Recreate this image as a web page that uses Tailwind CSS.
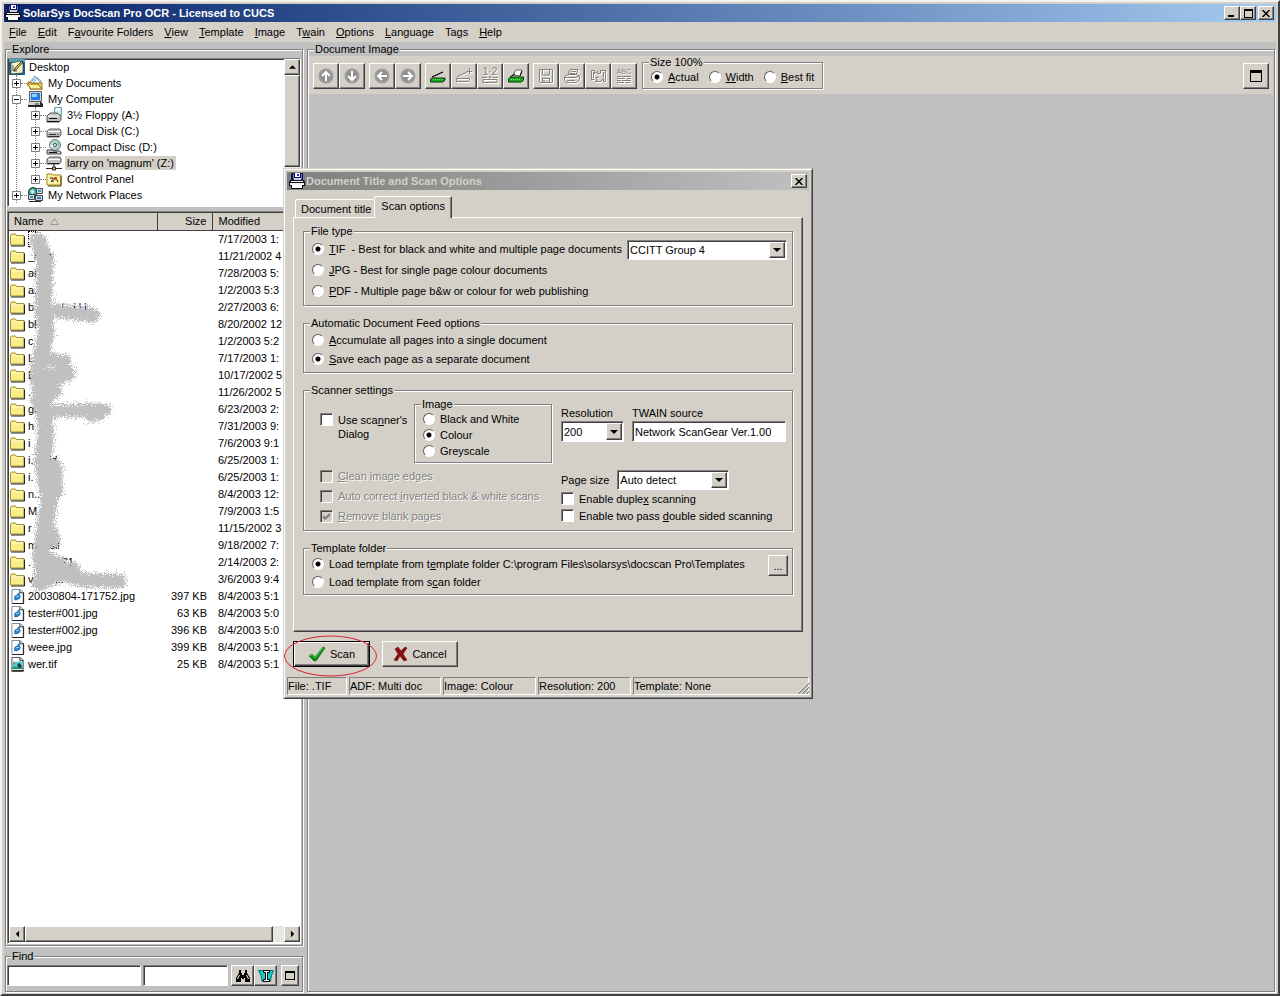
<!DOCTYPE html>
<html lang="en">
<head>
  <meta charset="UTF-8">
  <title>SolarSys DocScan Pro OCR - Licensed to CUCS</title>
  <script src="https://cdn.jsdelivr.net/npm/@tailwindcss/browser@4"></script>
</head>
<body class="bg-[#d4d0c8] font-['Liberation_Sans',Arial,sans-serif] text-[11px] leading-[14px] text-black">

  <!-- Icon set -->
  <svg class="hidden" aria-hidden="true">
    <symbol id="app" viewBox="0 0 16 16">
      <path d="M3 0h11v8H2V1z" fill="#10104a"/><path d="M4 1h1v5H4zM12 1h1v5h-1z" fill="#5a6cf0"/><path d="M6 0h5v4H6z" fill="#fff"/><path d="M8 1h2v2H8z" fill="#2434c8"/><path d="M5 5h7v3H5z" fill="#c8d0e8"/>
      <path d="M1 7h14l1 2v4H0V9z" fill="#111"/><path d="M2 8h12v1H2zM1 10h14v2H1z" fill="#f4f4f4"/><path d="M2 12h12v4H2z" fill="#111"/><path d="M3 12h10v3H3z" fill="#fff"/>
    </symbol>
    <symbol id="desktop" viewBox="0 0 16 16">
      <path d="M0 0h16v16H0z" fill="#1c6286"/><path d="M0 0h16v3H0z" fill="#50a4b8"/><path d="M2 4l9-2 3 3v9L2 15z" fill="#f8f3cd" stroke="#333" stroke-width=".7"/><path d="M5 12l1-3 7-7 1 1-6 7z" fill="#e6c63c" stroke="#222" stroke-width=".8"/><path d="M4 6v6h4" fill="none" stroke="#555"/>
    </symbol>
    <symbol id="documents" viewBox="0 0 16 16">
      <path d="M3 7l5-6 6 5v6H3z" fill="#fff" stroke="#7a8ca0"/><path d="M5 6l4-3 4 4M6 8l3-3" fill="none" stroke="#4a9fd5"/><path d="M1 7h3l1 1h10v6H3z" fill="#f4d95e" stroke="#9a7b12"/><path d="M0 9h11l4 5H4z" fill="#fff09a" stroke="#8a6d10"/>
    </symbol>
    <symbol id="computer" viewBox="0 0 16 16">
      <path d="M2.500.500h12v10h-12z" fill="#d6d2c4" stroke="#557"/><path d="M4 2h9v7H4z" fill="#1c7fe0"/><path d="M5 3h5v3H5z" fill="#8fd2ff"/><path d="M1 11h13l2 2v3H1z" fill="#223"/><path d="M1 11h12v3H1z" fill="#d9d5c8"/><path d="M8 13h4" stroke="#333"/>
    </symbol>
    <symbol id="floppy" viewBox="0 0 16 16">
      <path d="M8.500.500h7v8h-7z" fill="#cfe6ef" stroke="#6c9db4"/><path d="M10 1h4v3h-4z" fill="#fff"/><path d="M1 9l3-3h7l4 3v4l-2 2H1z" fill="#c0c0c0" stroke="#555"/><path d="M3 11.500h8M1 14.500h12" stroke="#111"/><path d="M2 9h11" stroke="#fff"/>
    </symbol>
    <symbol id="disk" viewBox="0 0 16 16">
      <path d="M1 8l3-2h10l1 2v4l-2 2H1z" fill="#b9b9b9" stroke="#666"/><path d="M2 8.500h12" stroke="#fff"/><path d="M3 11.500h7M2 13.500h11" stroke="#333"/><path d="M11 11h2v1h-2z" fill="#2a2"/>
    </symbol>
    <symbol id="cd" viewBox="0 0 16 16">
      <circle cx="9" cy="6" r="5.500" fill="#b8ccc8" stroke="#678"/><path d="M9 6l4-4 1 4z" fill="#75d28f"/><path d="M9 6l-4 3-1-3z" fill="#e8f4ff"/><circle cx="9" cy="6" r="1.500" fill="#fff" stroke="#555"/><path d="M1 11h5l2 1h5l2 1v2H1z" fill="#c8c8c8" stroke="#444"/><path d="M3 13.500h8" stroke="#111"/>
    </symbol>
    <symbol id="netdrive" viewBox="0 0 16 16">
      <path d="M1 4l3-2h10l1 2v3l-2 2H1z" fill="#c4c4c4" stroke="#555"/><path d="M2 4.500h12" stroke="#fff"/><path d="M2 8.500h11M8 9v4M0 13.500h16" stroke="#222"/><path d="M6.500 12h3v3h-3z" fill="#d8c24a" stroke="#222"/>
    </symbol>
    <symbol id="control" viewBox="0 0 16 16">
      <path d="M1 3h5l1 1h8v10H1z" fill="#fff0a0" stroke="#a58a1a"/><path d="M15 5v10H2" fill="none" stroke="#4b3d05"/><path d="M4 7h3v4M10 7l2 4" fill="none" stroke="#222"/><path d="M8 6h3v3H8z" fill="#d44a24"/><path d="M5 9h2v2H5z" fill="#2a60c0"/>
    </symbol>
    <symbol id="network" viewBox="0 0 16 16">
      <circle cx="6" cy="5" r="4.500" fill="#33a862" stroke="#134"/><path d="M3 4l3-2 2 3-3 3z" fill="#bfe8ff"/><path d="M9.500 1.500h6v5h-6zM1.500 7.500h6v5h-6z" fill="#dad6c8" stroke="#445"/><path d="M11 3h3v2h-3zM3 9h3v2H3z" fill="#1da0d8"/><path d="M8.500 8.500h7v5h-7z" fill="#dad6c8" stroke="#445"/><path d="M10 10h4v2h-4z" fill="#1c7fe0"/><path d="M2 14.500h12" stroke="#223"/>
    </symbol>
    <symbol id="folder" viewBox="0 0 16 14">
      <path d="M.5 3l1-1.500h4l1 1.500h7.500v9.500H.5z" fill="#f8ee88" stroke="#a09030"/><path d="M2 4.500h11" stroke="#fffbd8"/><path d="M14.500 4v9.500H1" fill="none" stroke="#222"/>
    </symbol>
    <symbol id="jpg" viewBox="0 0 14 16">
      <path d="M.5.500h9l3 3v12H.5z" fill="#fff" stroke="#7b8590"/><path d="M13 4v11.500H1" fill="none" stroke="#111"/><path d="M9 1v3h4" fill="none" stroke="#222"/><path d="M3 8l2-2 1 0 1-2h2v2l1 2-1 2-3 2H3z" fill="#2a7ec0"/><path d="M5 8.500l3-1" stroke="#bfe2ff"/>
    </symbol>
    <symbol id="tif" viewBox="0 0 14 16">
      <path d="M.5.500h9l3 3v12H.5z" fill="#fff" stroke="#444"/><path d="M9 1v3h4" fill="none" stroke="#222"/><path d="M1 5h11v5H1z" fill="#4cd0d8"/><path d="M1 10h11v3H1z" fill="#1a8f7c"/><path d="M6 9l2-3 3 3-2 3z" fill="#1d3b34"/><path d="M1 14.500h12" stroke="#111"/><path d="M2 6h2v2H2z" fill="#e8566a"/>
    </symbol>
    <symbol id="up" viewBox="0 0 16 16">
      <circle cx="8" cy="8" r="7.500" fill="#909090"/><circle cx="8" cy="8" r="6.500" fill="none" stroke="#a8a8a8"/><path d="M8 13V4M4 8l4-4 4 4" fill="none" stroke="#fff" stroke-width="2"/>
    </symbol>
    <symbol id="scan" viewBox="0 0 16 16">
      <path d="M2 9L13 4" fill="none" stroke="#000" stroke-width="1.300"/><path d="M.5 11l1.500-1h13v2l-2 2H.5z" fill="#1fa51f" stroke="#063a06"/><path d="M3 11.500h10" stroke="#6be56b" stroke-dasharray="1 1"/>
    </symbol>
    <symbol id="scan-page" viewBox="0 0 16 16">
      <path d="M5 7l3-5h6l-2 6z" fill="#fff" stroke="#666"/><path d="M2 9l5-3M12 8l2-5" stroke="#000"/><path d="M.5 11l2-2h13v3l-2 2H.5z" fill="#1fa51f" stroke="#063a06"/><path d="M3 11.500h10" stroke="#6be56b" stroke-dasharray="1 1"/>
    </symbol>
    <symbol id="scan-add" viewBox="0 0 16 16">
      <path d="M1 9l10-5M13.500 0v6M11 3.500h5M.5 10.500h13v2l-1 1H.5z" fill="none" stroke="currentColor"/>
    </symbol>
    <symbol id="scan-bed" viewBox="0 0 16 16">
      <path d="M0 8.500h5m2 0h2m2 0h5M1 10.500h14v3H1zM7 6.500l2 2" fill="none" stroke="currentColor"/>
    </symbol>
    <symbol id="save" viewBox="0 0 16 16">
      <path d="M1.500 1.500h13v13h-12l-1-1zM4.500 2v5h7V2M4.500 14.500v-4h7v4M6 12v2" fill="none" stroke="currentColor"/>
    </symbol>
    <symbol id="print" viewBox="0 0 16 16">
      <path d="M4 7l2-5.500h8L12 7M7 3.500h5M6 5.500h5M.5 9l3-2.500h9l3 2v3l-3 3h-10l-2-2zM1 9.500h11l3-2M3 12.500h8" fill="none" stroke="currentColor"/>
    </symbol>
    <symbol id="rotate" viewBox="0 0 16 16">
      <path d="M1.500 2.500v9h3M3.500 4v6M1.500 2.500h3v3l3-2v2h3v-3h5v11h-2v-3l-3 3h-5l2-2-2-2h3M13.500 4v5M5 13.500h5" fill="none" stroke="currentColor"/>
    </symbol>
    <symbol id="lines" viewBox="0 0 16 9">
      <path d="M1 1.500h4m1 0h9M1 3.500h8m2 0h4M1 5.500h4m1 0h9M1 7.500h7m2 0h5" fill="none" stroke="currentColor"/>
    </symbol>
    <symbol id="box" viewBox="0 0 14 14">
      <path d="M1.500 1.500h11v11h-11z" fill="none" stroke="#000"/><path d="M1 1h12v3H1z"/>
    </symbol>
    <symbol id="binoculars" viewBox="0 0 16 16">
      <path d="M4 2h2v3h1v2h2V5h1V2h2v3l3 5v4h-5v-4H9v1H7v-1H6v4H1v-4l3-5z"/><path d="M4.500 7l-2 4M11.500 7l2 4" stroke="#fff"/>
    </symbol>
    <symbol id="textfind" viewBox="0 0 16 16">
      <path d="M.5 2.500h15l-2 5-1 6H4l-1-6z" fill="#18c8c8" stroke="#077"/><path d="M5.500 2.500h6v2h-2v7h2v2h-6v-2h2v-7h-2z" fill="#fff" stroke="#000"/>
    </symbol>
    <symbol id="close" viewBox="0 0 8 7"><path d="M.5 0L7.500 7M7.500 0L.5 7" stroke="#000" stroke-width="1.500"/></symbol>
    <symbol id="arrow" viewBox="0 0 8 4"><path d="M0 0h8L4 4z"/></symbol>
  </svg>

  <div class="relative flex min-h-screen flex-col border-2 border-t-[#f4f2ee] border-l-[#f4f2ee] border-r-[#404040] border-b-[#404040] p-[2px]">

    <header class="flex h-[18px] items-center bg-linear-to-r from-[#0a246a] to-[#a6caf0] pr-[2px] pl-px text-white">
      <svg class="size-4"><use href="#app"/></svg>
      <h1 class="flex-1 pl-[2px] font-bold">SolarSys DocScan Pro OCR - Licensed to CUCS</h1>
      <button aria-label="Minimize" class="flex h-[14px] w-4 items-end border border-t-white border-l-white border-r-[#404040] border-b-[#404040] bg-[#d4d0c8] pb-[2px] pl-[3px] shadow-[inset_-1px_-1px_0_#808080]"><span class="h-[2px] w-[6px] bg-black"></span></button>
      <button aria-label="Maximize" class="flex h-[14px] w-4 items-center justify-center border border-t-white border-l-white border-r-[#404040] border-b-[#404040] bg-[#d4d0c8] shadow-[inset_-1px_-1px_0_#808080]"><span class="h-[9px] w-[9px] border border-t-2 border-black"></span></button>
      <button aria-label="Close" class="ml-[2px] flex h-[14px] w-4 items-center justify-center border border-t-white border-l-white border-r-[#404040] border-b-[#404040] bg-[#d4d0c8] shadow-[inset_-1px_-1px_0_#808080]"><svg class="h-[7px] w-2"><use href="#close"/></svg></button>
    </header>

    <nav class="flex h-5 items-center gap-[11px] pl-[5px]">
      <a href="#"><u>F</u>ile</a>
      <a href="#"><u>E</u>dit</a>
      <a href="#">F<u>a</u>vourite Folders</a>
      <a href="#"><u>V</u>iew</a>
      <a href="#"><u>T</u>emplate</a>
      <a href="#"><u>I</u>mage</a>
      <a href="#">T<u>w</u>ain</a>
      <a href="#"><u>O</u>ptions</a>
      <a href="#"><u>L</u>anguage</a>
      <a href="#">Ta<u>g</u>s</a>
      <a href="#"><u>H</u>elp</a>
    </nav>

    <main class="flex flex-1 gap-1 bg-[#c0c0c0] px-px">
      <div class="flex w-[298px] flex-col gap-[3px]">
        <fieldset class="flex min-w-0 flex-1 flex-col border border-[#808080] px-px pb-px shadow-[1px_1px_0_#fff,inset_1px_1px_0_#fff]">
          <legend class="ml-1 bg-[#c0c0c0] px-px">Explore</legend>

          <div class="mt-[2px] flex h-[149px] border border-t-[#808080] border-l-[#808080] border-r-white border-b-white bg-white shadow-[inset_1px_1px_0_#404040]">
            <div class="min-w-0 flex-1 overflow-hidden">
              <div class="flex h-4 items-center gap-1 pl-px"><svg class="size-4"><use href="#desktop"/></svg>Desktop</div>
              <ul id="tree" class="relative before:absolute before:top-0 before:left-2 before:h-full before:border-l before:border-dotted before:border-[#808080]"></ul>
            </div>
            <div class="flex w-4 flex-col bg-[#e9e7e3]">
              <button aria-label="Scroll up" class="flex h-4 items-center justify-center border border-t-white border-l-white border-r-[#404040] border-b-[#404040] bg-[#d4d0c8] shadow-[inset_-1px_-1px_0_#808080]"><svg class="h-1 w-[7px] rotate-180"><use href="#arrow"/></svg></button>
              <div class="h-[92px] border border-t-white border-l-white border-r-[#404040] border-b-[#404040] bg-[#d4d0c8] shadow-[inset_-1px_-1px_0_#808080]"></div>
            </div>
          </div>

          <div class="relative mt-1 flex flex-1 flex-col overflow-hidden border border-t-[#808080] border-l-[#808080] border-r-white border-b-white bg-white pb-px shadow-[inset_1px_1px_0_#404040]">
            <div class="flex-1 overflow-hidden pt-px pl-px">
              <table class="w-full table-fixed border-collapse whitespace-pre">
                <thead>
                  <tr class="h-[17px] bg-[#d4d0c8]">
                    <th class="w-[148px] border-r border-b border-[#404040] pl-[5px] text-left font-normal"><span class="inline-flex items-center gap-1">Name <svg class="h-[7px] w-[9px]" viewBox="0 0 9 7"><path d="M.5 6.500L4.500.500l4 6z" fill="none" stroke="#999"/></svg></span></th>
                    <th class="w-[55px] border-r border-b border-[#404040] pr-[5px] text-right font-normal">Size</th>
                    <th class="border-b border-[#404040] pl-[6px] text-left font-normal">Modified</th>
                  </tr>
                </thead>
                <tbody id="files"></tbody>
              </table>
            </div>
            <!-- grey scribble over the private folder names -->
            <svg class="pointer-events-none absolute top-0 left-0 h-[400px] w-[200px]" viewBox="7 211 200 400" fill="none" stroke="#c0c0c0" stroke-linecap="round" stroke-linejoin="round">
              <filter id="grain" x="-10%" y="-5%" width="120%" height="110%"><feTurbulence type="fractalNoise" baseFrequency="0.9" numOctaves="1" result="n"/><feDisplacementMap in="SourceGraphic" in2="n" scale="16" xChannelSelector="R" yChannelSelector="G"/></filter>
              <g filter="url(#grain)">
                <path d="M37 240l7 20-1 30-1 20 3 20-5 25-3 20 5 30 3 30-4 25 4 20 3 20-3 20-3 20-2 15 2 25" stroke-width="17"/>
                <path d="M46 309l46 5M40 358l23 2M38 384l30-11M35 377l32-5M36 400l18-9M48 410l55-1M90 414l8-1" stroke-width="14"/>
                <path d="M54 465v26M38 554l22 10M38 582l34-14M46 568l34 10M80 579l38 1M50 532l2 6M40 392v12" stroke-width="15"/>
              </g>
            </svg>
            <div class="ml-px flex h-4 bg-[#e9e7e3]">
              <button aria-label="Scroll left" class="flex w-4 items-center justify-center border border-t-white border-l-white border-r-[#404040] border-b-[#404040] bg-[#d4d0c8] shadow-[inset_-1px_-1px_0_#808080]"><svg class="h-1 w-[7px] rotate-90"><use href="#arrow"/></svg></button>
              <div class="w-[248px] border border-t-white border-l-white border-r-[#404040] border-b-[#404040] bg-[#d4d0c8] shadow-[inset_-1px_-1px_0_#808080]"></div>
              <button aria-label="Scroll right" class="ml-auto flex w-4 items-center justify-center border border-t-white border-l-white border-r-[#404040] border-b-[#404040] bg-[#d4d0c8] shadow-[inset_-1px_-1px_0_#808080]"><svg class="h-1 w-[7px] -rotate-90"><use href="#arrow"/></svg></button>
            </div>
          </div>
        </fieldset>

        <fieldset class="min-w-0 border border-[#808080] px-px pb-[5px] shadow-[1px_1px_0_#fff,inset_1px_1px_0_#fff]">
          <legend class="ml-1 bg-[#c0c0c0] px-px">Find</legend>
          <div class="mt-[2px] flex h-[21px]">
            <input aria-label="Find text" class="w-[134px] border border-t-[#808080] border-l-[#808080] border-r-white border-b-white bg-white px-1 shadow-[inset_1px_1px_0_#404040]">
            <input aria-label="Find in" class="ml-[2px] w-[85px] border border-t-[#808080] border-l-[#808080] border-r-white border-b-white bg-white px-1 shadow-[inset_1px_1px_0_#404040]">
            <button aria-label="Find" class="ml-[3px] flex w-[23px] items-center justify-center border border-t-white border-l-white border-r-[#404040] border-b-[#404040] bg-[#d4d0c8] shadow-[inset_-1px_-1px_0_#808080]"><svg class="size-4"><use href="#binoculars"/></svg></button>
            <button aria-label="Full text search" class="flex w-[23px] items-center justify-center border border-t-white border-l-white border-r-[#404040] border-b-[#404040] bg-[#d4d0c8] shadow-[inset_-1px_-1px_0_#808080]"><svg class="size-4"><use href="#textfind"/></svg></button>
            <button aria-label="Expand" class="ml-1 flex w-[18px] items-center justify-center border border-t-white border-l-white border-r-[#404040] border-b-[#404040] bg-[#d4d0c8] shadow-[inset_-1px_-1px_0_#808080]"><span class="h-[9px] w-[10px] border border-t-2 border-black"></span></button>
          </div>
        </fieldset>
      </div>

      <fieldset class="min-w-0 flex-1 border border-[#808080] px-px shadow-[1px_1px_0_#fff,inset_1px_1px_0_#fff]">
        <legend class="ml-[5px] bg-[#c0c0c0] px-px">Document Image</legend>
        <div class="flex h-[38px] items-start gap-1 bg-[#d4d0c8] px-1">
          <div class="mt-[7px] flex [&_button]:flex [&_button]:size-[26px] [&_button]:items-center [&_button]:justify-center [&_button]:border [&_button]:border-t-white [&_button]:border-l-white [&_button]:border-r-[#404040] [&_button]:border-b-[#404040] [&_button]:shadow-[inset_-1px_-1px_0_#808080]">
            <button aria-label="Up"><svg class="size-4"><use href="#up"/></svg></button>
            <button aria-label="Down"><svg class="size-4 rotate-180"><use href="#up"/></svg></button>
          </div>
          <div class="mt-[7px] flex [&_button]:flex [&_button]:size-[26px] [&_button]:items-center [&_button]:justify-center [&_button]:border [&_button]:border-t-white [&_button]:border-l-white [&_button]:border-r-[#404040] [&_button]:border-b-[#404040] [&_button]:shadow-[inset_-1px_-1px_0_#808080]">
            <button aria-label="Previous"><svg class="size-4 -rotate-90"><use href="#up"/></svg></button>
            <button aria-label="Next"><svg class="size-4 rotate-90"><use href="#up"/></svg></button>
          </div>
          <div class="mt-[7px] flex text-[#808080] [&_button]:flex [&_button]:size-[26px] [&_button]:flex-col [&_button]:items-center [&_button]:justify-center [&_button]:border [&_button]:border-t-white [&_button]:border-l-white [&_button]:border-r-[#404040] [&_button]:border-b-[#404040] [&_button]:shadow-[inset_-1px_-1px_0_#808080]">
            <button aria-label="Scan"><svg class="size-4"><use href="#scan"/></svg></button>
            <button aria-label="Add page" disabled><svg class="size-4 drop-shadow-[1px_1px_0_#fff]"><use href="#scan-add"/></svg></button>
            <button aria-label="Insert page" disabled><span class="text-[10px] leading-[8px] [text-shadow:1px_1px_0_#fff]">1·2</span><svg class="h-2 w-4 drop-shadow-[1px_1px_0_#fff]" viewBox="0 7 16 8"><use href="#scan-bed" width="16" height="16"/></svg></button>
            <button aria-label="Scan documents"><svg class="size-4"><use href="#scan-page"/></svg></button>
          </div>
          <div class="mt-[7px] flex text-[#808080] [&_button]:flex [&_button]:size-[26px] [&_button]:flex-col [&_button]:items-center [&_button]:justify-center [&_button]:border [&_button]:border-t-white [&_button]:border-l-white [&_button]:border-r-[#404040] [&_button]:border-b-[#404040] [&_button]:shadow-[inset_-1px_-1px_0_#808080]">
            <button aria-label="Save" disabled><svg class="size-4 drop-shadow-[1px_1px_0_#fff]"><use href="#save"/></svg></button>
            <button aria-label="Print" disabled><svg class="size-4 drop-shadow-[1px_1px_0_#fff]"><use href="#print"/></svg></button>
            <button aria-label="Rotate" disabled><svg class="size-4 drop-shadow-[1px_1px_0_#fff]"><use href="#rotate"/></svg></button>
            <button aria-label="OCR" disabled><span class="text-[7px] leading-[7px] [text-shadow:1px_1px_0_#fff]">ABC</span><svg class="h-[9px] w-4 drop-shadow-[1px_1px_0_#fff]"><use href="#lines"/></svg></button>
          </div>
          <fieldset class="ml-px h-[33px] w-[181px] border border-[#808080] shadow-[1px_1px_0_#fff,inset_1px_1px_0_#fff]">
            <legend class="ml-[6px] bg-[#d4d0c8] px-px leading-[13px]">Size 100%</legend>
            <div class="flex gap-[10px] pt-px pl-2">
              <label class="flex items-center gap-[5px]"><input type="radio" name="size" checked class="size-3 appearance-none rounded-full border border-t-[#606060] border-l-[#606060] border-r-white border-b-white bg-white checked:bg-[radial-gradient(circle,#000_2px,#fff_3px)]"><span><u>A</u>ctual</span></label>
              <label class="flex items-center gap-[5px]"><input type="radio" name="size" class="size-3 appearance-none rounded-full border border-t-[#606060] border-l-[#606060] border-r-white border-b-white bg-white checked:bg-[radial-gradient(circle,#000_2px,#fff_3px)]"><span><u>W</u>idth</span></label>
              <label class="flex items-center gap-[5px]"><input type="radio" name="size" class="size-3 appearance-none rounded-full border border-t-[#606060] border-l-[#606060] border-r-white border-b-white bg-white checked:bg-[radial-gradient(circle,#000_2px,#fff_3px)]"><span><u>B</u>est fit</span></label>
            </div>
          </fieldset>
          <button aria-label="Full screen" class="mt-[7px] ml-auto flex size-[26px] items-center justify-center border border-t-white border-l-white border-r-[#404040] border-b-[#404040] shadow-[inset_-1px_-1px_0_#808080]"><svg class="size-[14px]"><use href="#box"/></svg></button>
        </div>
      </fieldset>
    </main>

    <!-- Scan options dialog, floats over the main window -->
    <section role="dialog" aria-labelledby="dialogTitle" class="absolute top-[166px] left-[281px] flex w-[530px] flex-col border border-t-[#d4d0c8] border-l-[#d4d0c8] border-r-[#404040] border-b-[#404040] bg-[#d4d0c8] p-[3px] shadow-[inset_1px_1px_0_#fff,inset_-1px_-1px_0_#808080]">
      <div class="flex h-[18px] items-center bg-linear-to-r from-[#808080] to-[#c0c0c0] px-[2px]">
        <svg class="size-4"><use href="#app"/></svg>
        <h2 id="dialogTitle" class="flex-1 pl-px font-bold text-[#d4d0c8]">Document Title and Scan Options</h2>
        <button aria-label="Close" class="flex h-[14px] w-4 items-center justify-center border border-t-white border-l-white border-r-[#404040] border-b-[#404040] bg-[#d4d0c8] shadow-[inset_-1px_-1px_0_#808080]"><svg class="h-[7px] w-2"><use href="#close"/></svg></button>
      </div>

      <div role="tablist" class="mt-[6px] flex items-end pl-2">
        <button role="tab" class="h-[18px] rounded-t-[2px] border-t border-l border-white pr-[3px] pl-[5px]">Document title</button>
        <button role="tab" aria-selected="true" class="relative z-10 -mb-px h-[22px] rounded-t-[2px] border border-b-0 border-t-white border-l-white border-r-[#404040] bg-[#d4d0c8] px-[6px] pb-[3px] shadow-[inset_-1px_0_0_#808080]">Scan options</button>
      </div>

      <div class="mx-[6px] flex flex-col gap-[10px] border border-t-white border-l-white border-r-[#404040] border-b-[#404040] px-[9px] pt-[6px] pb-9 shadow-[inset_-1px_-1px_0_#808080] [&_input[type=radio]]:size-3 [&_input[type=radio]]:shrink-0 [&_input[type=radio]]:appearance-none [&_input[type=radio]]:rounded-full [&_input[type=radio]]:border [&_input[type=radio]]:border-t-[#606060] [&_input[type=radio]]:border-l-[#606060] [&_input[type=radio]]:border-r-white [&_input[type=radio]]:border-b-white [&_input[type=radio]]:bg-white [&_input[type=radio]:checked]:bg-[radial-gradient(circle,#000_2px,#fff_3px)] [&_input[type=checkbox]]:size-[13px] [&_input[type=checkbox]]:shrink-0 [&_input[type=checkbox]]:appearance-none [&_input[type=checkbox]]:border [&_input[type=checkbox]]:border-t-[#808080] [&_input[type=checkbox]]:border-l-[#808080] [&_input[type=checkbox]]:border-r-white [&_input[type=checkbox]]:border-b-white [&_input[type=checkbox]]:bg-white [&_input[type=checkbox]]:shadow-[inset_1px_1px_0_#404040] [&_input[type=checkbox]:disabled]:bg-[#d4d0c8]">
        <fieldset class="border border-[#808080] pb-1 pl-2 shadow-[1px_1px_0_#fff,inset_1px_1px_0_#fff]">
          <legend class="-ml-[2px] bg-[#d4d0c8] px-px">File type</legend>
          <div class="flex">
            <div class="w-[315px]">
              <label class="flex h-[21px] items-center gap-[5px] whitespace-pre"><input type="radio" name="type" checked><span><u>T</u>IF  - Best for black and white and multiple page documents</span></label>
              <label class="flex h-[21px] items-center gap-[5px]"><input type="radio" name="type"><span><u>J</u>PG - Best for single page colour documents</span></label>
              <label class="flex h-[21px] items-center gap-[5px]"><input type="radio" name="type"><span><u>P</u>DF - Multiple page b&amp;w or colour for web publishing</span></label>
            </div>
            <div class="relative mt-[2px] h-5 w-[160px]">
              <select aria-label="Compression" class="size-full appearance-none border border-t-[#808080] border-l-[#808080] border-r-white border-b-white bg-white pl-[2px] shadow-[inset_1px_1px_0_#404040]"><option>CCITT Group 4</option></select>
              <span class="pointer-events-none absolute top-[2px] right-[2px] flex h-4 w-4 items-center justify-center border border-t-white border-l-white border-r-[#404040] border-b-[#404040] bg-[#d4d0c8] shadow-[inset_-1px_-1px_0_#808080]"><svg class="h-1 w-2"><use href="#arrow"/></svg></span>
            </div>
          </div>
        </fieldset>

        <fieldset class="border border-[#808080] pb-1 pl-2 shadow-[1px_1px_0_#fff,inset_1px_1px_0_#fff]">
          <legend class="-ml-[2px] bg-[#d4d0c8] px-px">Automatic Document Feed options</legend>
          <label class="flex h-[19px] items-center gap-[5px]"><input type="radio" name="adf"><span><u>A</u>ccumulate all pages into a single document</span></label>
          <label class="flex h-[19px] items-center gap-[5px]"><input type="radio" name="adf" checked><span><u>S</u>ave each page as a separate document</span></label>
        </fieldset>

        <fieldset class="border border-[#808080] pb-1 pl-4 shadow-[1px_1px_0_#fff,inset_1px_1px_0_#fff]">
          <legend class="-ml-[10px] bg-[#d4d0c8] px-px">Scanner settings</legend>
          <div class="flex">
            <div class="w-[241px]">
              <div class="flex">
                <label class="mt-4 flex w-[94px] items-start gap-[5px]"><input type="checkbox"><span>Use sca<u>n</u>ner's<br>Dialog</span></label>
                <fieldset class="w-[138px] border border-[#808080] pb-[3px] pl-2 shadow-[1px_1px_0_#fff,inset_1px_1px_0_#fff]">
                  <legend class="-ml-[2px] bg-[#d4d0c8] px-px">Image</legend>
                  <label class="flex h-4 items-center gap-[5px]"><input type="radio" name="image">Black and White</label>
                  <label class="flex h-4 items-center gap-[5px]"><input type="radio" name="image" checked>Colour</label>
                  <label class="flex h-4 items-center gap-[5px]"><input type="radio" name="image">Greyscale</label>
                </fieldset>
              </div>
              <div class="mt-[3px] text-[#808080] [text-shadow:1px_1px_0_#fff]">
                <label class="flex h-5 items-center gap-[5px]"><input type="checkbox" disabled><span><u>C</u>lean image edges</span></label>
                <label class="flex h-5 items-center gap-[5px]"><input type="checkbox" disabled><span>Auto correct <u>i</u>nverted black &amp; white scans</span></label>
                <label class="relative flex h-5 items-center gap-[5px]"><input type="checkbox" checked disabled><svg class="absolute top-[7px] left-[3px] size-[7px]" viewBox="0 0 7 7"><path d="M0 2l2 2 5-4v3L2 7 0 5z" fill="#808080"/></svg><span><u>R</u>emove blank pages</span></label>
              </div>
            </div>
            <div class="pt-[9px]">
              <div class="flex gap-2">
                <div>
                  <label for="resolution">Resolution</label>
                  <div class="relative mt-px h-[21px] w-[63px]">
                    <select id="resolution" class="size-full appearance-none border border-t-[#808080] border-l-[#808080] border-r-white border-b-white bg-white pl-[2px] shadow-[inset_1px_1px_0_#404040]"><option>200</option></select>
                    <span class="pointer-events-none absolute top-[2px] right-[2px] flex h-[17px] w-4 items-center justify-center border border-t-white border-l-white border-r-[#404040] border-b-[#404040] bg-[#d4d0c8] shadow-[inset_-1px_-1px_0_#808080]"><svg class="h-1 w-2"><use href="#arrow"/></svg></span>
                  </div>
                </div>
                <div>
                  <label for="twain">TWAIN source</label>
                  <input id="twain" value="Network ScanGear Ver.1.00" class="mt-px block h-[21px] w-[154px] border border-t-[#808080] border-l-[#808080] border-r-white border-b-white bg-white px-[2px] shadow-[inset_1px_1px_0_#404040]">
                </div>
              </div>
              <div class="mt-7 flex h-5 items-center gap-2">
                <label for="pageSize">Page size</label>
                <div class="relative h-5 w-[112px]">
                  <select id="pageSize" class="size-full appearance-none border border-t-[#808080] border-l-[#808080] border-r-white border-b-white bg-white pl-[2px] shadow-[inset_1px_1px_0_#404040]"><option>Auto detect</option></select>
                  <span class="pointer-events-none absolute top-[2px] right-[2px] flex h-4 w-4 items-center justify-center border border-t-white border-l-white border-r-[#404040] border-b-[#404040] bg-[#d4d0c8] shadow-[inset_-1px_-1px_0_#808080]"><svg class="h-1 w-2"><use href="#arrow"/></svg></span>
                </div>
              </div>
              <label class="flex h-[17px] items-center gap-[5px]"><input type="checkbox"><span>Enable duple<u>x</u> scanning</span></label>
              <label class="flex h-[17px] items-center gap-[5px]"><input type="checkbox"><span>Enable two pass <u>d</u>ouble sided scanning</span></label>
            </div>
          </div>
        </fieldset>

        <fieldset class="border border-[#808080] pb-[3px] pl-2 shadow-[1px_1px_0_#fff,inset_1px_1px_0_#fff]">
          <legend class="-ml-[2px] bg-[#d4d0c8] px-px">Template folder</legend>
          <div class="flex justify-between pr-1">
            <div>
              <label class="flex h-[18px] items-center gap-[5px]"><input type="radio" name="template" checked><span>Load template from t<u>e</u>mplate folder C:\program Files\solarsys\docscan Pro\Templates</span></label>
              <label class="flex h-[18px] items-center gap-[5px]"><input type="radio" name="template"><span>Load template from s<u>c</u>an folder</span></label>
            </div>
            <button aria-label="Browse" class="h-[21px] w-5 border border-t-white border-l-white border-r-[#404040] border-b-[#404040] shadow-[inset_-1px_-1px_0_#808080]">...</button>
          </div>
        </fieldset>
      </div>

      <div class="mt-[9px] flex gap-3 pl-[6px]">
        <div class="relative">
          <button class="flex h-[26px] w-[77px] items-center justify-center gap-1 border border-black shadow-[inset_1px_1px_0_#fff,inset_-1px_-1px_0_#404040,inset_-2px_-2px_0_#808080]">
            <svg class="h-4 w-[18px]" viewBox="0 0 18 16"><path d="M1 10l3-2 3 3 8-10 2 1L8 15H6z" fill="#0a8a12" stroke="#064d0a" stroke-width=".5"/><path d="M2 10l2-1 3 3 8-10" fill="none" stroke="#39d043"/></svg>Scan</button>
          <svg class="pointer-events-none absolute -top-[6px] -left-[9px] h-[42px] w-[93px]" viewBox="0 0 93 42"><ellipse cx="46.500" cy="21" rx="46" ry="20" fill="none" stroke="#d82030"/></svg>
        </div>
        <button class="flex h-[26px] w-[76px] items-center justify-center gap-1 border border-t-white border-l-white border-r-[#404040] border-b-[#404040] shadow-[inset_-1px_-1px_0_#808080]">
          <svg class="h-4 w-[15px]" viewBox="0 0 15 16"><path d="M2 3l3-2 3 4 4-4 2 1-4 6 4 6-3 1-4-5-3 5-3-1 4-6z" fill="#8c0c10" stroke="#5a0508" stroke-width=".5"/></svg>Cancel</button>
      </div>

      <div class="relative mt-[10px] flex gap-[2px] [&>span]:h-[18px] [&>span]:border [&>span]:border-t-[#808080] [&>span]:border-l-[#808080] [&>span]:border-r-white [&>span]:border-b-white [&>span]:leading-4">
        <span class="w-[60px]">File: .TIF</span>
        <span class="w-[92px]">ADF: Multi doc</span>
        <span class="w-[93px]">Image: Colour</span>
        <span class="w-[93px]">Resolution: 200</span>
        <span class="flex-1">Template: None</span>
        <svg class="absolute right-0 bottom-px size-3" viewBox="0 0 12 12"><path d="M1 12L12 1M5 12l7-7M9 12l3-3" stroke="#808080" stroke-width="1.500"/><path d="M0 12L12 0M4 12l8-8M8 12l4-4" stroke="#fff" stroke-width=".7"/></svg>
      </div>
    </section>
  </div>

  <script>
    const tree = [
      { icon: 'documents', label: 'My Documents' },
      { icon: 'computer', label: 'My Computer', children: [
        { icon: 'floppy', label: '3½ Floppy (A:)' },
        { icon: 'disk', label: 'Local Disk (C:)' },
        { icon: 'cd', label: 'Compact Disc (D:)' },
        { icon: 'netdrive', label: "larry on 'magnum' (Z:)", selected: true },
        { icon: 'control', label: 'Control Panel' }
      ] },
      { icon: 'network', label: 'My Network Places' }
    ];

    function treeNode(node) {
      const children = node.children ? `<ul class="relative pl-[19px] before:absolute before:top-0 before:left-[27px] before:h-[72px] before:border-l before:border-dotted before:border-[#808080]">${node.children.map(treeNode).join('')}</ul>` : '';
      return `
        <li>
          <div class="relative flex h-4 items-center pl-1">
            <svg class="size-[9px] bg-white" viewBox="0 0 9 9"><path d="M.5.5h8v8h-8z" fill="none" stroke="#808080"/><path d="M2 4.5h5${node.children ? '' : 'M4.5 2v5'}" stroke="#000"/></svg>
            <span class="w-[6px] border-t border-dotted border-[#808080]"></span>
            <svg class="size-4"><use href="#${node.icon}"/></svg>
            <span class="ml-[3px] px-[2px] ${node.selected ? 'bg-[#d4d0c8]' : ''}">${node.label}</span>
          </div>
          ${children}
        </li>`;
    }
    document.getElementById('tree').innerHTML = tree.map(treeNode).join('');

    // icon, name, size, modified
    const files = [
      ['folder', '', '', '7/17/2003 1:'],
      ['folder', '_lists', '', '11/21/2002 4'],
      ['folder', 'ai  .', '', '7/28/2003 5:'],
      ['folder', 'a... .', '', '1/2/2003 5:3'],
      ['folder', 'b.      ..l . l.l.l', '', '2/27/2003 6:'],
      ['folder', 'bl   .', '', '8/20/2002 12'],
      ['folder', 'c', '', '1/2/2003 5:2'],
      ['folder', 'L       . ...', '', '7/17/2003 1:'],
      ['folder', 'D .  ..  .', '', '10/17/2002 5'],
      ['folder', '.', '', '11/26/2002 5'],
      ['folder', 'gr       .,  . .. . .:', '', '6/23/2003 2:'],
      ['folder', 'h', '', '7/31/2003 9:'],
      ['folder', 'i', '', '7/6/2003 9:1'],
      ['folder', 'i. . . ld', '', '6/25/2003 1:'],
      ['folder', 'i.      .d', '', '6/25/2003 1:'],
      ['folder', 'n..   .', '', '8/4/2003 12:'],
      ['folder', 'M  .', '', '7/9/2003 1:5'],
      ['folder', 'r    . ...', '', '11/15/2002 3'],
      ['folder', 'm    sil', '', '9/18/2002 7:'],
      ['folder', '. .  .     71', '', '2/14/2003 2:'],
      ['folder', 'v .  .  ...  . .  . .', '', '3/6/2003 9:4'],
      ['jpg', '20030804-171752.jpg', '397 KB', '8/4/2003 5:1'],
      ['jpg', 'tester#001.jpg', '63 KB', '8/4/2003 5:0'],
      ['jpg', 'tester#002.jpg', '396 KB', '8/4/2003 5:0'],
      ['jpg', 'weee.jpg', '399 KB', '8/4/2003 5:1'],
      ['tif', 'wer.tif', '25 KB', '8/4/2003 5:1']
    ];
    document.getElementById('files').innerHTML = files.map(([icon, name, size, modified], i) => `
      <tr class="h-[17px]">
        <td class="p-0"><div class="flex h-[17px] items-center gap-[2px] pl-px"><svg class="h-[15px] w-4"><use href="#${icon}"/></svg><span class="h-4 leading-4 ${i ? '' : 'w-2 border border-dotted border-black'}">${name}</span></div></td>
        <td class="p-0 pr-[5px] text-right">${size}</td>
        <td class="p-0 pl-[6px]">${modified}</td>
      </tr>`).join('');
  </script>
</body>
</html>
